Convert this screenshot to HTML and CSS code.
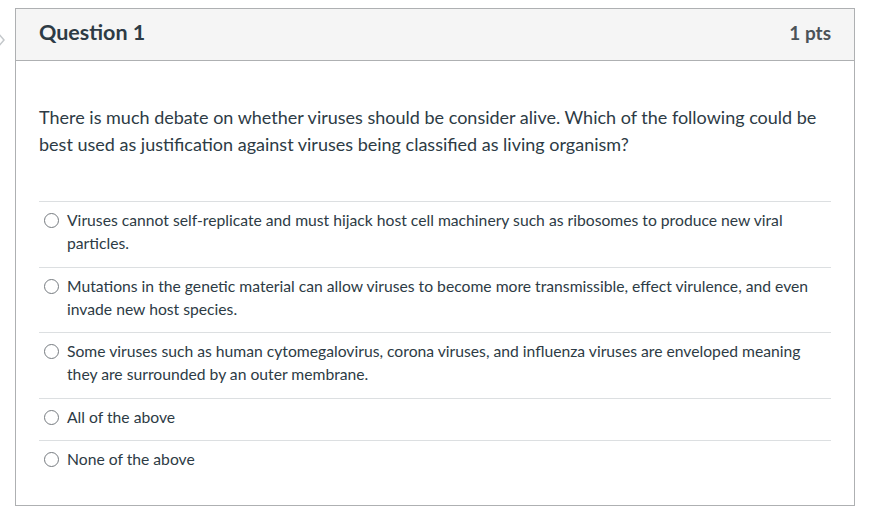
FILE: index.html
```html
<!DOCTYPE html>
<html>
<head>
<meta charset="utf-8">
<link rel="stylesheet" href="styles.css">
</head>
<body>
<div class="page">
  <div class="nav-edge">
    <svg width="15" height="60" viewBox="0 0 15 60"><polyline points="-3,24 4,32 -3,40" fill="none" stroke="#c4c8cb" stroke-width="1.5"/></svg>
  </div>
  <div class="card">
    <div class="card-header">
      <span class="q-title">Question 1</span>
      <span class="q-pts">1 pts</span>
    </div>
    <div class="card-body">
      <p class="q-text">There is much debate on whether viruses should be consider alive. Which of the following could be best used as justification against viruses being classified as living organism?</p>
      <ul class="answers">
        <li class="answer"><span class="radio"></span><span class="label">Viruses cannot self-replicate and must hijack host cell machinery such as ribosomes to produce new viral particles.</span></li>
        <li class="answer"><span class="radio"></span><span class="label">Mutations in the genetic material can allow viruses to become more transmissible, effect virulence, and even invade new host species.</span></li>
        <li class="answer"><span class="radio"></span><span class="label">Some viruses such as human cytomegalovirus, corona viruses, and influenza viruses are enveloped meaning they are surrounded by an outer membrane.</span></li>
        <li class="answer"><span class="radio"></span><span class="label">All of the above</span></li>
        <li class="answer last"><span class="radio"></span><span class="label">None of the above</span></li>
      </ul>
    </div>
  </div>
</div>
</body>
</html>
```

FILE: styles.css
```css
* { box-sizing: border-box; }
html, body { margin: 0; padding: 0; background: #fff; }
body {
  font-family: Lato, "Open Sans", "Liberation Sans", sans-serif;
  color: #2d3b45;
}
.page {
  display: flex;
  padding-top: 8px;
}
.nav-edge {
  width: 15px;
  flex: none;
}
.nav-edge svg { display: block; }
.card {
  width: 840px;
  height: 498px;
  border: 1px solid #aeb0b2;
  flex: none;
}
.card-header {
  height: 52px;
  background: #f5f5f5;
  border-bottom: 1px solid #aeb0b2;
  display: flex;
  align-items: center;
  justify-content: space-between;
  padding: 0 23px 5px 23px;
}
.q-title {
  font-size: 21.5px;
  font-weight: 700;
  color: #2d3b45;
}
.q-pts {
  font-size: 19px;
  font-weight: 700;
  color: #4b5257;
}
.card-body {
  padding: 43px 23px 0 23px;
}
.q-text {
  margin: 0 0 43px 0;
  font-size: 18px;
  line-height: 27px;
}
.answers {
  list-style: none;
  margin: 0;
  padding: 0;
}
.answer {
  display: flex;
  align-items: flex-start;
  border-top: 1px solid #dcdfe1;
  padding: 7px 0 11.5px 5px;
  font-size: 15.7px;
  line-height: 23px;
}
.answer.last { padding-bottom: 0; }
.radio {
  flex: none;
  width: 15px;
  height: 15px;
  margin-top: 4px;
  margin-right: 8px;
  border: 1.5px solid #767b80;
  border-radius: 50%;
  background: #fff;
}
.label { flex: 1; }
```
